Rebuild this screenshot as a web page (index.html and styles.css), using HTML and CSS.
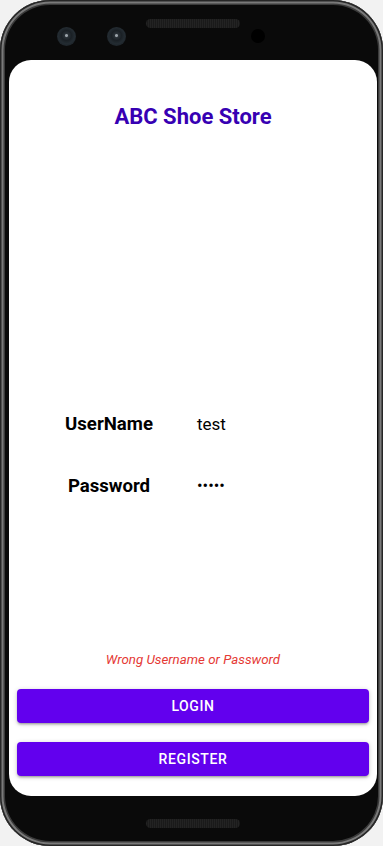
FILE: index.html
```html
<!DOCTYPE html>
<html lang="en">
<head>
<meta charset="utf-8">
<title>ABC Shoe Store</title>
<link rel="stylesheet" href="styles.css">
</head>
<body>
<div class="phone">
  <div class="bezel-top">
    <span class="lens lens-1"></span>
    <span class="lens lens-2"></span>
    <span class="grill grill-top"></span>
    <span class="sensor"></span>
  </div>
  <div class="screen">
    <h1 class="title">ABC Shoe Store</h1>
    <div class="form">
      <div class="label">UserName</div>
      <div class="value">test</div>
      <div class="label">Password</div>
      <div class="value dots">•••••</div>
    </div>
    <p class="error">Wrong Username or Password</p>
    <button class="btn btn-login">LOGIN</button>
    <button class="btn btn-register">REGISTER</button>
  </div>
  <div class="bezel-bottom">
    <span class="grill"></span>
  </div>
</div>
</body>
</html>
```
FILE: styles.css
```css
html, body {
  margin: 0;
  padding: 0;
  background: #f2f2f2;
}

body {
  width: 383px;
  height: 846px;
  overflow: hidden;
  font-family: Roboto, "Liberation Sans", sans-serif;
}

.phone {
  width: 383px;
  height: 846px;
  box-sizing: border-box;
  border-radius: 50px;
  background: #0a0a0a;
  box-shadow:
    inset 0 0 0 1.5px #262626,
    inset 0 0 0 3.5px #7a7a7a,
    inset 0 0 0 5px #3a3a3a;
  display: flex;
  flex-direction: column;
}

.bezel-top {
  height: 60px;
  display: flex;
  align-items: flex-start;
  flex-shrink: 0;
}

.lens {
  width: 19px;
  height: 19px;
  margin-top: 27px;
  border-radius: 50%;
  background: radial-gradient(circle at 50% 45%, #9aa2a8 0 1px, #2a3137 2px, #1a2025 5px, #232b31 8px, #1f262c 10px);
}

.lens-1 { margin-left: 57px; }
.lens-2 { margin-left: 31px; }

.grill {
  display: block;
  width: 94px;
  height: 9px;
  border-radius: 5px;
  background: repeating-linear-gradient(90deg, #232323 0 1px, #1a1a1a 1px 2px);
}

.grill-top {
  margin-top: 19px;
  margin-left: 20px;
}

.sensor {
  width: 14px;
  height: 14px;
  margin-top: 29px;
  margin-left: 11px;
  border-radius: 50%;
  background: #000;
}

.screen {
  height: 736px;
  margin: 0 6px 0 9px;
  background: #fff;
  border-radius: 22px;
  display: flex;
  flex-direction: column;
  flex-shrink: 0;
}

.title {
  margin: 44px 0 0;
  height: 26px;
  line-height: 26px;
  font-size: 22px;
  font-weight: 700;
  color: #3700b3;
  text-align: center;
}

.form {
  margin-top: 274px;
  padding-left: 12px;
  display: grid;
  grid-template-columns: 176px 1fr;
  grid-auto-rows: 40px;
  row-gap: 22px;
  align-items: center;
}

.label {
  text-align: center;
  font-size: 18.6px;
  font-weight: 700;
  line-height: 40px;
  color: #000;
}

.value {
  font-size: 17px;
  line-height: 40px;
  color: #000;
}

.dots {
  letter-spacing: 0;
  font-weight: 400;
  font-size: 16.5px;
}

.error {
  margin: 146px 0 0;
  height: 16px;
  line-height: 16px;
  font-size: 13.3px;
  font-style: italic;
  color: #e53935;
  text-align: center;
}

.btn {
  display: block;
  margin: 0 8px;
  height: 34px;
  border: none;
  border-radius: 4px;
  background: #6200ee;
  color: #fff;
  font-family: Roboto, "Liberation Sans", sans-serif;
  font-size: 14px;
  font-weight: 500;
  letter-spacing: 0.6px;
  padding: 0;
  box-shadow: 0 2px 2px rgba(0,0,0,.14), 0 3px 1px -2px rgba(0,0,0,.12), 0 1px 5px rgba(0,0,0,.2);
}

.btn-login { margin-top: 21px; }
.btn-register { margin-top: 19px; }

.bezel-bottom {
  height: 50px;
  display: flex;
  justify-content: flex-start;
  flex-shrink: 0;
}

.bezel-bottom .grill {
  margin-top: 23px;
  margin-left: 146px;
}
```
